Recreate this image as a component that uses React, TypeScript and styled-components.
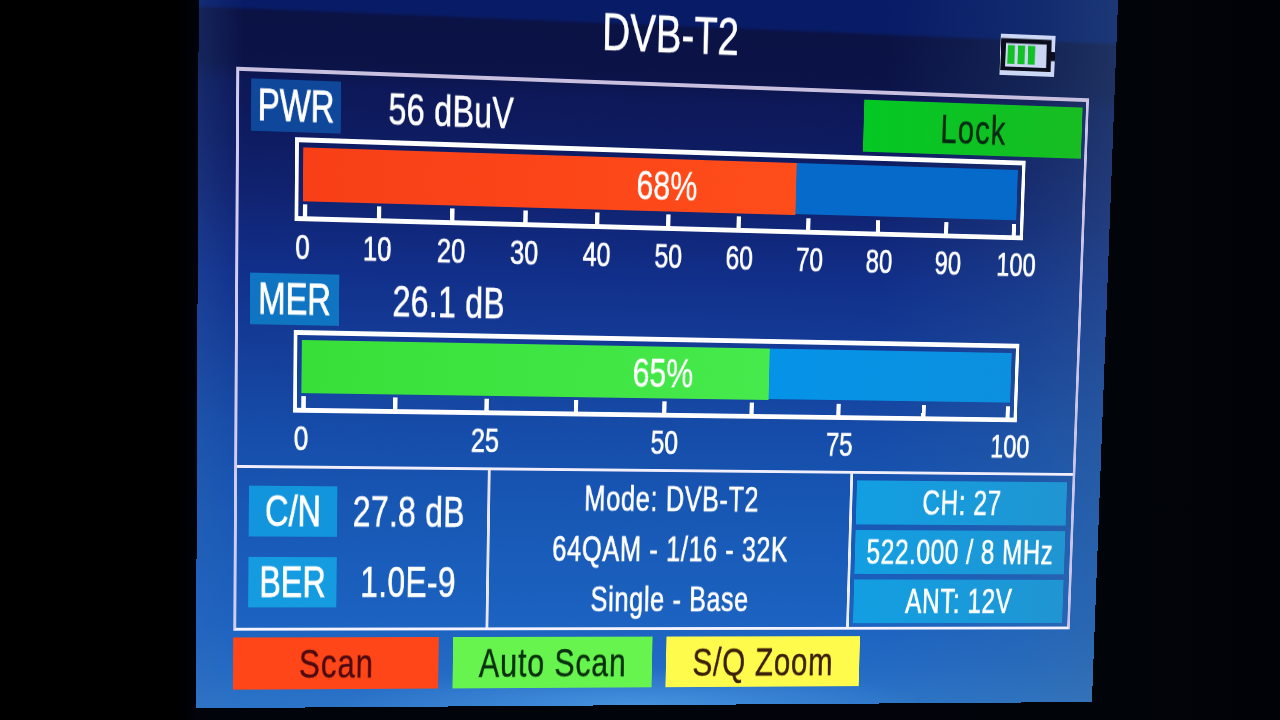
import React from 'react';
import styled, { createGlobalStyle } from 'styled-components';

const PANEL_W = 1200;
const PANEL_H = 570;
const OFFSET_X = 50;
const OFFSET_Y = 110;

type Point = [number, number];

// maps the flat panel rectangle onto four corners (tl, tr, br, bl)
const cornerPin = ([p0, p1, p2, p3]: Point[], w: number, h: number) => {
  const dx1 = p1[0] - p2[0];
  const dx2 = p3[0] - p2[0];
  const sx = p0[0] - p1[0] + p2[0] - p3[0];
  const dy1 = p1[1] - p2[1];
  const dy2 = p3[1] - p2[1];
  const sy = p0[1] - p1[1] + p2[1] - p3[1];
  const det = dx1 * dy2 - dx2 * dy1;
  const g = (sx * dy2 - dx2 * sy) / det;
  const k = (dx1 * sy - sx * dy1) / det;
  const m = [
    (p1[0] - p0[0] + g * p1[0]) / w,
    (p1[1] - p0[1] + g * p1[1]) / w,
    0,
    g / w,
    (p3[0] - p0[0] + k * p3[0]) / h,
    (p3[1] - p0[1] + k * p3[1]) / h,
    0,
    k / h,
    0,
    0,
    1,
    0,
    p0[0],
    p0[1],
    0,
    1,
  ];
  return `matrix3d(${m.map(n => n.toFixed(9)).join(',')})`;
};

const tilt = cornerPin(
  [
    [236.3, 66.7],
    [1089, 98.3],
    [1069.7, 629.3],
    [233.3, 630.7],
  ],
  PANEL_W,
  PANEL_H,
);

interface MeterProps {
  name: string;
  value: string;
  percent: string;
  fill: number;
  steps: number;
  labels: string[];
  chip: string;
  bar: string;
  rest: string;
  lock?: boolean;
}

const Meter: React.FC<MeterProps> = ({ name, value, percent, fill, steps, labels, chip, bar, rest, lock }) => (
  <MeterBox>
    <MeterHead>
      <Chip $bg={chip}>{name}</Chip>
      <Reading $width={300}>{value}</Reading>
      {lock && <Lock>Lock</Lock>}
    </MeterHead>
    <Gauge>
      <Track $bg={rest}>
        <Fill $bg={bar} style={{ width: `${fill}%` }} />
        <Percent>{percent}</Percent>
      </Track>
      <Ticks>
        {Array.from({ length: steps }, (_, i) => (
          <Tick key={i} />
        ))}
      </Ticks>
    </Gauge>
    <Scale>
      {labels.map(l => (
        <ScaleLabel key={l}>{l}</ScaleLabel>
      ))}
    </Scale>
  </MeterBox>
);

const Battery = () => (
  <BatteryIcon viewBox="0 0 81 43">
    <rect width="81" height="43" fill="#ccd8f6" />
    <path d="M1 4.5H75.5V17H81V26.5H75.5V38H1Z" fill="#0b0d1c" />
    <rect x="8" y="9.5" width="60.5" height="24.5" fill="#ccd6f4" />
    <path d="M11 11.5h10.5v19.5h-10.5zM26 11.5h10.5v19.5h-10.5zM41 11.5h10.5v19.5h-10.5z" fill="#12c126" />
  </BatteryIcon>
);

const App: React.FC = () => {
  return (
    <Stage>
      <GlobalStyle />
      <Screen>
        <Header>
          <Title>DVB-T2</Title>
          <Battery />
        </Header>
        <Panel>
          <Meters>
            <Meter
              name="PWR"
              value="56 dBuV"
              percent="68%"
              fill={68}
              steps={10}
              labels={['0', '10', '20', '30', '40', '50', '60', '70', '80', '90', '100']}
              chip="#0f489b"
              bar="linear-gradient(90deg, #f83f17, #ff4d1a)"
              rest="#056ac9"
              lock
            />
            <Meter
              name="MER"
              value="26.1 dB"
              percent="65%"
              fill={64.8}
              steps={8}
              labels={['0', '25', '50', '75', '100']}
              chip="#0f74c1"
              bar="linear-gradient(90deg, #38df38, #46ea4c)"
              rest="linear-gradient(90deg, #0593e8 65%, #0c90de)"
            />
          </Meters>
          <Details>
            <Quality>
              <QualityRow>
                <Chip $bg="#1295dd">C/N</Chip>
                <Reading $width={197}>27.8 dB</Reading>
              </QualityRow>
              <QualityRow>
                <Chip $bg="#149be0">BER</Chip>
                <Reading $width={197}>1.0E-9</Reading>
              </QualityRow>
            </Quality>
            <Mode>
              <ModeLine>Mode: DVB-T2</ModeLine>
              <ModeLine>64QAM - 1/16 - 32K</ModeLine>
              <ModeLine>Single - Base</ModeLine>
            </Mode>
            <Channel>
              <ChannelRow>CH: 27</ChannelRow>
              <ChannelRow>522.000 / 8 MHz</ChannelRow>
              <ChannelRow>ANT: 12V</ChannelRow>
            </Channel>
          </Details>
        </Panel>
        <Actions>
          <Action $bg="#ff4618" $color="#4c0a10">
            Scan
          </Action>
          <Action $bg="#68f44e" $color="#08300f">
            Auto Scan
          </Action>
          <Action $bg="#fffb4c" $color="#3a2008">
            S/Q Zoom
          </Action>
        </Actions>
      </Screen>
    </Stage>
  );
};

export default App;

const GlobalStyle = createGlobalStyle`
  * {
    box-sizing: border-box;
  }
  body {
    margin: 0;
    background: #010206;
    font-family: 'Liberation Sans', Arial, sans-serif;
  }
`;

const Stage = styled.div`
  width: 1280px;
  height: 720px;
  overflow: hidden;
  background: linear-gradient(90deg, #000 0, #000 180px, #02040c 198px, #010409 1140px, #000208 1280px);
`;

const Screen = styled.div`
  width: 1288px;
  height: 760px;
  padding: 0 38px 0 ${OFFSET_X}px;
  transform-origin: 0 0;
  transform: ${tilt} translate(-${OFFSET_X}px, -${OFFSET_Y}px);
  color: #fff;
  background:
    radial-gradient(ellipse 420px 40px at 610px 760px, rgba(90, 170, 240, 0.55), rgba(90, 170, 240, 0)),
    linear-gradient(90deg, rgba(60, 110, 180, 0.2), rgba(50, 100, 180, 0) 60px),
    linear-gradient(270deg, rgba(68, 110, 150, 0.34), rgba(60, 110, 150, 0.2) 110px, rgba(50, 100, 150, 0) 340px),
    linear-gradient(
      180deg,
      #081b66 0,
      #081b66 50px,
      #0b1244 54px,
      #0b1347 105px,
      #0d1858 125px,
      #0e1c62 180px,
      #10226f 230px,
      #112f8a 310px,
      #143d98 390px,
      #164ca9 470px,
      #1858b5 560px,
      #1c62c0 670px,
      #236ac4 720px,
      #2c74c8 760px
    );
`;

const Header = styled.div`
  display: grid;
  grid-template-columns: 1fr auto 1fr;
  align-items: center;
  width: 1184px;
  height: ${OFFSET_Y}px;
  padding-top: 10px;
`;

const Title = styled.div`
  grid-column: 2;
  font-size: 54px;
  line-height: 60px;
  -webkit-text-stroke: 0.6px currentColor;
`;

const BatteryIcon = styled.svg`
  justify-self: end;
  width: 81px;
  height: 43px;
  margin: 15px 37px 0 0;
`;

const Panel = styled.div`
  display: flex;
  flex-direction: column;
  width: ${PANEL_W}px;
  height: ${PANEL_H}px;
  border-style: solid;
  border-width: 4px 4px 3px;
  border-color: #c9c0e0 #cbc6e8 #f4f2ff #d2ccf0;
`;

const Meters = styled.div`
  height: 396px;
  padding-top: 7px;
`;

const MeterBox = styled.div`
  height: 194px;
`;

const MeterHead = styled.div`
  display: flex;
  align-items: center;
  height: 52px;
  padding: 0 5px 0 16px;
  margin-bottom: 5px;
`;

const Chip = styled.div<{ $bg: string }>`
  width: 120px;
  height: 52px;
  font-size: 44px;
  line-height: 51px;
  text-align: center;
  background: ${p => p.$bg};
  -webkit-text-stroke: 0.8px currentColor;
`;

const Reading = styled.div<{ $width: number }>`
  width: ${p => p.$width}px;
  font-size: 44px;
  line-height: 50px;
  letter-spacing: 0.4px;
  text-align: center;
  white-space: nowrap;
  -webkit-text-stroke: 0.6px currentColor;
`;

const Lock = styled.div`
  width: 321px;
  height: 54px;
  margin-left: auto;
  font-size: 43px;
  line-height: 54px;
  letter-spacing: 1.5px;
  text-align: center;
  color: #042a14;
  background: linear-gradient(90deg, #04c824, #18bd22);
  -webkit-text-stroke: 0.4px currentColor;
`;

const Gauge = styled.div`
  display: flex;
  flex-direction: column;
  justify-content: space-between;
  width: 1030px;
  height: 84px;
  margin-left: 75px;
  padding: 5px 6px 0;
  border: 5px solid #fff;
`;

const Track = styled.div<{ $bg: string }>`
  display: grid;
  align-items: center;
  height: 53px;
  background: ${p => p.$bg};
  > * {
    grid-area: 1 / 1;
  }
`;

const Fill = styled.div<{ $bg: string }>`
  height: 100%;
  background: ${p => p.$bg};
`;

const Percent = styled.div`
  padding: 1px 6px 0 0;
  font-size: 43px;
  line-height: 53px;
  text-align: center;
  -webkit-text-stroke: 0.4px currentColor;
`;

const Ticks = styled.div`
  display: flex;
  height: 12px;
`;

const Tick = styled.div`
  flex: 1;
  border-left: 6px solid #fff;
  &:last-child {
    border-right: 6px solid #fff;
  }
`;

const Scale = styled.div`
  display: flex;
  justify-content: space-between;
  width: 1010px;
  margin-left: 86px;
  font-size: 35px;
  line-height: 51px;
  -webkit-text-stroke: 0.7px currentColor;
`;

const ScaleLabel = styled.div`
  display: flex;
  justify-content: center;
  width: 0;
`;

const Details = styled.div`
  display: flex;
  flex: 1;
  border-top: 3px solid #f1eefc;
`;

const Quality = styled.div`
  display: flex;
  flex-direction: column;
  gap: 20px;
  width: 347px;
  padding: 17px 0 0 16px;
  border-right: 4px solid #e8e6fa;
`;

const QualityRow = styled.div`
  display: flex;
  align-items: center;
  height: 53px;
`;

const Mode = styled.div`
  width: 518px;
  padding-top: 2px;
  border-right: 4px solid #f0eefc;
`;

const ModeLine = styled.div`
  font-size: 36px;
  line-height: 53px;
  letter-spacing: 1px;
  text-align: center;
  -webkit-text-stroke: 0.7px currentColor;
`;

const Channel = styled.div`
  display: flex;
  flex: 1;
  flex-direction: column;
  gap: 6px;
  padding: 7px 8px 4px 6px;
`;

const ChannelRow = styled.div`
  flex: 1;
  font-size: 36px;
  line-height: 47px;
  letter-spacing: 1px;
  text-align: center;
  white-space: nowrap;
  background: linear-gradient(90deg, #129fe2, #2095d2);
  -webkit-text-stroke: 0.7px currentColor;
`;

const Actions = styled.div`
  display: flex;
  gap: 20px;
  margin-top: 7px;
`;

const Action = styled.div<{ $bg: string; $color: string }>`
  width: 282px;
  height: 54px;
  font-size: 43px;
  line-height: 54px;
  letter-spacing: 1.2px;
  text-align: center;
  color: ${p => p.$color};
  background: ${p => p.$bg};
  -webkit-text-stroke: 0.4px currentColor;
`;
